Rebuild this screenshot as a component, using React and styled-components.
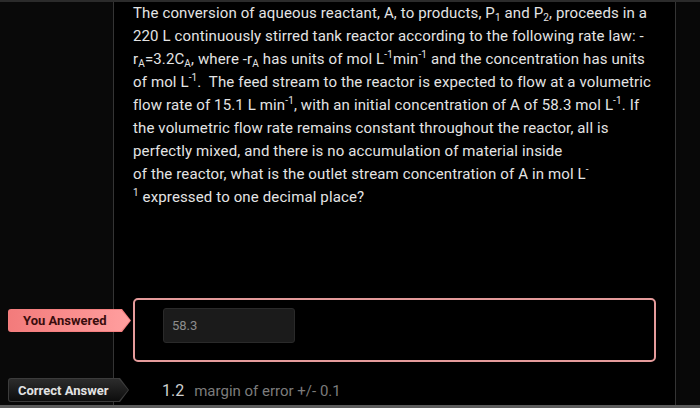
import React from 'react'
import styled, { createGlobalStyle } from 'styled-components'

const GlobalStyle = createGlobalStyle`
  *, *::before, *::after {
    box-sizing: border-box;
  }
  body {
    margin: 0;
    background: #000;
    font-family: Roboto, "Noto Sans", sans-serif;
  }
`

const Page = styled.div`
  width: 700px;
  height: 408px;
  display: flex;
  flex-direction: column;
  background: #000;
  border-top: 2px solid #2b2b2b;
  border-bottom: 3px solid #5c5c5c;
  overflow: hidden;
`

const Row = styled.div`
  display: grid;
  grid-template-columns: 114px 562px 24px;
  height: ${p => p.h}px;
`

const Side = styled.div`
  background: #090909;
  border-right: 1px solid #343434;
  padding: ${p => p.pad || '0'};
  position: relative;
  z-index: 2;
`

const Content = styled.div`
  border-right: 1px solid #343434;
  padding: ${p => p.pad || '0 0 0 19px'};
`

const Rail = styled.div`
  background: #080808;
`

const Question = styled.div`
  color: #e4e4e4;
  font-size: 15px;
  line-height: 23px;
  letter-spacing: 0.13px;

  sub, sup {
    font-size: 10px;
    line-height: 0;
    position: relative;
    vertical-align: baseline;
  }
  sub {
    top: 3px;
  }
  sup {
    top: -6px;
  }
`

const Line = styled.div`
  white-space: nowrap;
`

const Tag = styled.div`
  width: ${p => p.w}px;
  height: ${p => p.h}px;
  margin-left: 8px;
  padding: 1px;
  border-radius: 3px;
  background: ${p => p.edge};
  clip-path: polygon(0 0, calc(100% - 9px) 0, 100% 50%, calc(100% - 9px) 100%, 0 100%);
`

const TagInner = styled.div`
  height: 100%;
  border-radius: 2px;
  background: ${p => p.bg};
  clip-path: polygon(0 0, calc(100% - 9px) 0, 100% 50%, calc(100% - 9px) 100%, 0 100%);
  color: ${p => p.color};
  font-size: 13px;
  font-weight: 700;
  display: flex;
  align-items: center;
  padding-left: ${p => p.indent}px;
`

const AnswerBox = styled.div`
  height: 64px;
  border: 2px solid #e59b9b;
  border-radius: 5px;
  padding: 8px 0 0 28px;
`

const Input = styled.div`
  width: 132px;
  height: 35px;
  background: #1b1b1b;
  border: 1px solid #2a2a2a;
  border-radius: 3px;
  color: #8c8c8c;
  font-size: 13px;
  display: flex;
  align-items: center;
  padding-left: 8px;
`

const Correct = styled.div`
  display: flex;
  align-items: center;
  gap: 10px;
  height: 100%;
  padding-left: 48px;
  padding-top: 4px;
`

const Value = styled.span`
  color: #cfcfcf;
  font-size: 16px;
`

const Margin = styled.span`
  color: #7c7c7c;
  font-size: 15px;
`

export default function App() {
  return (
    <>
      <GlobalStyle />
      <Page>
        <Row h={288}>
          <Side />
          <Content>
            <Question>
              <Line>The conversion of aqueous reactant, A, to products, P<sub>1</sub> and P<sub>2</sub>, proceeds in a</Line>
              <Line>220 L continuously stirred tank reactor according to the following rate law: -</Line>
              <Line>r<sub>A</sub>=3.2C<sub>A</sub>, where -r<sub>A</sub> has units of mol L<sup>-1</sup>min<sup>-1</sup> and the concentration has units</Line>
              <Line>of mol L<sup>-1</sup>.&nbsp; The feed stream to the reactor is expected to flow at a volumetric</Line>
              <Line>flow rate of 15.1 L min<sup>-1</sup>, with an initial concentration of A of 58.3 mol L<sup>-1</sup>. If</Line>
              <Line>the volumetric flow rate remains constant throughout the reactor, all is</Line>
              <Line>perfectly mixed, and there is no accumulation of material inside</Line>
              <Line>of the reactor, what is the outlet stream concentration of A in mol L<sup>-</sup></Line>
              <Line><sup>1</sup> expressed to one decimal place?</Line>
            </Question>
          </Content>
          <Rail />
        </Row>
        <Row h={82}>
          <Side pad="19px 0 0 0">
            <Tag w={123} h={23} edge="#f47f7f">
              <TagInner bg="linear-gradient(90deg, #f37b7b, #ff9f9f)" color="#3a0d0d" indent={14}>
                You Answered
              </TagInner>
            </Tag>
          </Side>
          <Content pad="8px 19px 0 19px">
            <AnswerBox>
              <Input>58.3</Input>
            </AnswerBox>
          </Content>
          <Rail />
        </Row>
        <Row h={33}>
          <Side pad="6px 0 0 0">
            <Tag w={121} h={24} edge="#3c3c3c">
              <TagInner bg="linear-gradient(180deg, #2c2c2c, #0d0d0d)" color="#e2e2e2" indent={9}>
                Correct Answer
              </TagInner>
            </Tag>
          </Side>
          <Content pad="0">
            <Correct>
              <Value>1.2</Value>
              <Margin>margin of error +/- 0.1</Margin>
            </Correct>
          </Content>
          <Rail />
        </Row>
      </Page>
    </>
  )
}
